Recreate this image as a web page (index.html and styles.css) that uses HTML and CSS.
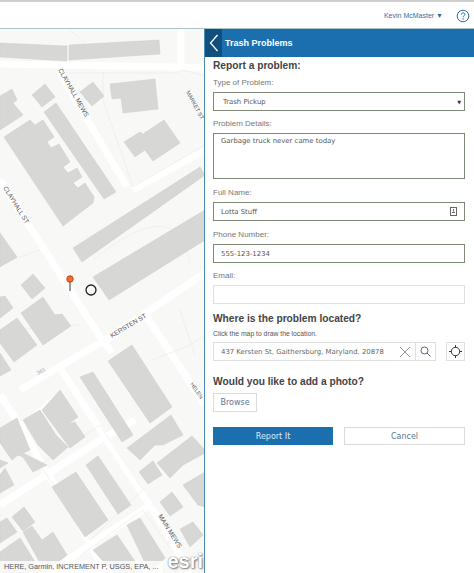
FILE: index.html
```html
<!DOCTYPE html>
<html>
    <head>
        <title>Trash Problems</title>
        <link rel="stylesheet" href="styles.css">
    </head>
    <body>
        <div class="topbar">
            <span class="username">Kevin McMaster &#9660;</span>
            <svg class="help" width="14" height="14" viewBox="0 0 14 14">
                <circle cx="7" cy="7" r="5.8" fill="none" stroke="#2c6f9f" stroke-width="1"/>
                <path d="M5.2 5.6c0-1.2.9-1.8 1.9-1.8s1.8.7 1.8 1.6c0 1.4-1.8 1.4-1.8 2.9" fill="none" stroke="#2c6f9f" stroke-width="1"/>
                <circle cx="7.1" cy="10" r=".7" fill="#2c6f9f"/>
            </svg>
        </div>
        <div class="main">
            <div class="map">
                <svg class="mapdraw" width="205" height="544" viewBox="0 29 205 544">
                    <rect x="0" y="29" width="205" height="544" fill="#f8f8f6"/>
                    <g class="roads">
                        <path d="M0 64L177 67L205 68"/>
                        <path d="M181 29V70"/>
                        <path d="M58 70L127 187"/>
                        <path d="M0 180L100 337L112 352"/>
                        <path d="M20 390L110 337L205 273"/>
                        <path d="M58 365L167 532L190 573"/>
                        <path d="M147 317L205 405"/>
                        <path d="M133 190L205 150"/>
                        <path d="M0 445L60 395"/>
                        <path d="M0 505L100 440L135 420"/>
                        <path d="M60 565L150 505"/>
                        <path d="M0 395L20 425L45 470L75 515L105 573"/>
                    </g>
                    <g class="lots">
                        <path d="M70 30L85 43M69 73H176L183 70L205 76"/>
                        <path d="M103 72V100L133 187L205 145"/>
                        <path d="M153 360L190 345L205 335M180 310L195 355"/>
                        <path d="M40 465L100 425L143 490L90 540Z"/>
                        <path d="M80 556L143 510L170 548"/>
                        <path d="M93 260Q180 190 190 265"/>
                        <path d="M0 265Q25 255 40 250M0 330L80 325"/>
                    </g>
                    <g class="buildings">
                        <path d="M0 43L67 46V61L0 57Z"/>
                        <path d="M69 45L159 40L160 54L69 60Z"/>
                        <path d="M32 95L45 84L55 97L42 107Z"/>
                        <path d="M0 96L12 89L17 100L13 103L23 115L0 130Z"/>
                        <path d="M44 112L56 103L116 192L104 199Z"/>
                        <path d="M4 137L30 120L35 125L43 120L54 137L47 142L51 148L59 144L70 162L63 167L68 173L77 168L82 177L73 183L78 188L85 183L94 197L93 203L63 226Z"/>
                        <path d="M80 92L93 82L104 96L92 106Z"/>
                        <path d="M110 84L155 79L158 109L123 113L121 98L112 99Z"/>
                        <path d="M124 142L140 132L143 134L164 120L180 143L153 161L145 150L135 157Z"/>
                        <path d="M73 248L200 167L205 175L82 262Z"/>
                        <path d="M93 277L205 210V240L109 300Z"/>
                        <path d="M0 233L17 257L0 267Z"/>
                        <path d="M21 285L33 274L45 288L32 299Z"/>
                        <path d="M0 297L5 296L13 308L0 318Z"/>
                        <path d="M21 313L43 297L55 315L62 314L71 326L43 345Z"/>
                        <path d="M0 330L17 318L37 345L14 362L0 343Z"/>
                        <path d="M0 353L11 370L0 376Z"/>
                        <path d="M108 361L132 345L172 407L150 423Z"/>
                        <path d="M80 377L93 372L133 435L122 442Z"/>
                        <path d="M127 448L171 415L183 435L163 445L155 445L140 460Z"/>
                        <path d="M157 463L192 436L205 450V453L183 465L170 478Z"/>
                        <path d="M139 472L153 461L162 475L148 484Z"/>
                        <path d="M183 485L205 472V507L198 505Z"/>
                        <path d="M160 502L172 492L183 507L170 516Z"/>
                        <path d="M180 529L193 522L203 535L190 547Z"/>
                        <path d="M86 465L98 456L131 505L118 514Z"/>
                        <path d="M52 487L76 472L108 520L85 537Z"/>
                        <path d="M42 410L60 390L78 417L68 424L75 422L85 437L70 448Z"/>
                        <path d="M23 420L40 410L56 435L68 447L53 460L38 445Z"/>
                        <path d="M0 428L17 418L30 450L23 453L47 465L33 472L23 457L18 455L12 460L0 443Z"/>
                        <path d="M0 460L8 463L0 468Z"/>
                        <path d="M0 475L5 468L14 485L0 493Z"/>
                        <path d="M12 517L24 507L35 522L23 531Z"/>
                        <path d="M0 522L7 518L17 532L0 543Z"/>
                        <path d="M23 532L32 526L42 540L53 532L67 555L45 572Z"/>
                        <path d="M0 552L20 538L42 573H0Z"/>
                        <path d="M93 550L117 535L143 573H114Z"/>
                        <path d="M127 525L140 518L165 558L150 573Z"/>
                    </g>
                    <g class="streets">
                        <text transform="translate(58 70) rotate(60)">CLAYHALL MEWS</text>
                        <text transform="translate(186 92) rotate(62)" class="tight">MARKET ST</text>
                        <text transform="translate(3 188) rotate(58)">CLAYHALL ST</text>
                        <text transform="translate(112 338) rotate(-31)">KERSTEN ST</text>
                        <text transform="translate(190 384) rotate(56)" class="tight">HELEN</text>
                        <text transform="translate(158 516) rotate(58)">MAIN MEWS</text>
                        <text transform="translate(38 375) rotate(-30)" class="small">361</text>
                    </g>
                    <circle cx="91" cy="290" r="5" fill="none" stroke="#222" stroke-width="1.3"/>
                    <path d="M70 281V291" stroke="#334" stroke-width="1"/>
                    <circle cx="70" cy="279" r="3.2" fill="#e8722c" stroke="#cf3e14" stroke-width="1"/>
                </svg>
                <div class="attribution">HERE, Garmin, INCREMENT P, USGS, EPA, ...</div>
                <div class="esri">esri</div>
            </div>
            <div class="panel">
                <div class="panelhead">
                    <div class="back">
                        <svg width="10" height="18" viewBox="0 0 10 18">
                            <path d="M8.5 1L1.5 9L8.5 17" fill="none" stroke="#fff" stroke-width="1.3"/>
                        </svg>
                    </div>
                    <span>Trash Problems</span>
                </div>
                <form class="report">
                    <h2 class="title">Report a problem:</h2>
                    <label class="lbl first">Type of Problem:</label>
                    <div class="inputform checked selectbox">
                        <span>Trash Pickup</span>
                        <span class="arrow">&#9660;</span>
                    </div>
                    <label class="lbl">Problem Details:</label>
                    <textarea class="inputform checked details">Garbage truck never came today</textarea>
                    <label class="lbl">Full Name:</label>
                    <div class="inputform checked namebox">
                        <span>Lotta Stuff</span>
                        <svg width="7" height="9" viewBox="0 0 7 9">
                            <rect x=".5" y=".5" width="6" height="8" fill="none" stroke="#666"/>
                            <path d="M3.5 2V4.5M2 5.5H5" stroke="#666"/>
                        </svg>
                    </div>
                    <label class="lbl">Phone Number:</label>
                    <input class="inputform checked" type="text" value="555-123-1234">
                    <label class="lbl">Email:</label>
                    <input class="inputform" type="text">
                    <h2 class="title where">Where is the problem located?</h2>
                    <p class="hint">Click the map to draw the location.</p>
                    <div class="searchrow">
                        <div class="search">
                            <span class="addr">437 Kersten St, Gaithersburg, Maryland, 20878</span>
                            <svg class="clear" width="12" height="12" viewBox="0 0 12 12">
                                <path d="M1 1L11 11M11 1L1 11" stroke="#999" stroke-width="1"/>
                            </svg>
                            <div class="searchbtn">
                                <svg width="11" height="11" viewBox="0 0 11 11">
                                    <circle cx="4.5" cy="4.5" r="3.5" fill="none" stroke="#55687a" stroke-width="1"/>
                                    <path d="M7 7L10.5 10.5" stroke="#55687a" stroke-width="1"/>
                                </svg>
                            </div>
                        </div>
                        <div class="locate">
                            <svg width="13" height="13" viewBox="0 0 13 13">
                                <circle cx="6.5" cy="6.5" r="4.2" fill="none" stroke="#333" stroke-width="1"/>
                                <path d="M6.5 0V2.5M6.5 10.5V13M0 6.5H2.5M10.5 6.5H13" stroke="#333" stroke-width="1"/>
                            </svg>
                        </div>
                    </div>
                    <h2 class="title photo">Would you like to add a photo?</h2>
                    <button class="browse" type="button">Browse</button>
                    <div class="actions">
                        <button id="btn" type="button">Report It</button>
                        <button id="cancel" type="button">Cancel</button>
                    </div>
                </form>
            </div>
        </div>
    </body>
</html>
```

FILE: styles.css
```css
body{
    margin:0;
    width:474px;
    height:573px;
    overflow:hidden;
    background-color:white;
    font-family:"Liberation Sans",Arial,sans-serif;
    color:#444;
}

.topbar{
    height:26px;
    border-top:2px solid #cfcfcf;
    border-bottom:1px solid #a9c3c9;
    display:flex;
    align-items:center;
    justify-content:flex-end;
    padding-right:4px;
}
.username{
    font-size:7px;
    color:#2f6f9f;
    margin-right:13px;
}
.help{
    margin-top:1px;
}

.main{
    display:flex;
    height:544px;
}
.map{
    position:relative;
    width:204px;
    flex:none;
    overflow:hidden;
    border-right:1px solid #4d8db5;
}
.mapdraw{
    display:block;
}
.roads path{
    fill:none;
    stroke:white;
    stroke-width:7;
}
.lots path{
    fill:none;
    stroke:#ebebe8;
    stroke-width:.7;
}
.buildings path{
    fill:#d7d7d5;
    stroke:#cdcdcb;
    stroke-width:.5;
}
.streets text{
    font-family:"Liberation Sans",Arial,sans-serif;
    font-size:6.5px;
    fill:#555;
}
.streets .small{
    font-size:5.5px;
    fill:#aaa;
}
.streets .tight{
    font-size:5.5px;
}
.attribution{
    position:absolute;
    left:0;
    bottom:0;
    width:159px;
    padding-left:4px;
    height:12px;
    line-height:12px;
    font-size:7.3px;
    white-space:nowrap;
    background-color:rgba(255,255,255,0.8);
    color:#555;
}
.esri{
    position:absolute;
    right:1px;
    bottom:0;
    font-size:20px;
    line-height:24px;
    font-weight:bold;
    color:white;
    text-shadow:0 0 1px #555,1px 1px 2px #777;
}

.panel{
    flex:1;
    min-width:0;
}
.panelhead{
    height:28px;
    background-color:#1c6fae;
    display:flex;
    align-items:center;
    color:white;
    font-size:9px;
    font-weight:bold;
}
.back{
    width:17px;
    height:28px;
    background-color:#10507f;
    display:flex;
    align-items:center;
    justify-content:center;
    margin-right:3px;
}

.report{
    display:flex;
    flex-direction:column;
    align-items:flex-start;
    padding:2px 9px 0 8px;
}
.title{
    margin:0;
    font-size:10.2px;
    line-height:14px;
    font-weight:bold;
    color:#444;
}
.lbl{
    font-size:8px;
    line-height:10px;
    color:#777;
    margin-top:8px;
    margin-bottom:4px;
}
.lbl.first{
    margin-top:5px;
}
.inputform{
    box-sizing:border-box;
    width:252px;
    height:19px;
    margin:0;
    padding:0 7px;
    border:1px solid #e0e0e0;
    border-radius:0;
    background-color:white;
    font-family:"DejaVu Sans",Verdana,sans-serif;
    font-size:6.9px;
    color:#555;
    outline:none;
}
.checked{
    border-color:#7c8a76;
}
.selectbox,.namebox{
    display:flex;
    align-items:center;
    justify-content:space-between;
}
.selectbox{
    padding-left:9px;
}
.namebox{
    margin-bottom:1px;
}
.arrow{
    font-size:5px;
    color:#333;
    margin-right:-4px;
}
.details{
    display:block;
    height:46px;
    margin-bottom:1px;
    padding:3px 7px;
    resize:none;
}
.where{
    margin-top:8px;
}
.hint{
    margin:3px 0 3px;
    font-size:6.8px;
    line-height:10px;
    color:#555;
}
.searchrow{
    display:flex;
    gap:10px;
    width:252px;
}
.search{
    box-sizing:border-box;
    flex:1;
    height:19px;
    border:1px solid #e0e0e0;
    display:flex;
    align-items:center;
    padding-left:7px;
    font-family:"DejaVu Sans",Verdana,sans-serif;
    font-size:6.9px;
    color:#666;
}
.addr{
    flex:1;
    white-space:nowrap;
}
.clear{
    margin-right:4px;
}
.searchbtn{
    width:19px;
    height:17px;
    border-left:1px solid #e0e0e0;
    display:flex;
    align-items:center;
    justify-content:center;
}
.locate{
    box-sizing:border-box;
    width:19px;
    height:19px;
    border:1px solid #e0e0e0;
    display:flex;
    align-items:center;
    justify-content:center;
}
.photo{
    margin-top:14px;
}
.browse{
    box-sizing:border-box;
    width:44px;
    height:19px;
    margin-top:4px;
    padding:0;
    border:1px solid #dcdcdc;
    background-color:white;
    font-family:"DejaVu Sans",Verdana,sans-serif;
    font-size:8px;
    color:#5a7690;
}
.actions{
    display:flex;
    justify-content:space-between;
    width:252px;
    margin-top:15px;
}
#btn,#cancel{
    box-sizing:border-box;
    height:18px;
    padding:0;
    font-family:"DejaVu Sans",Verdana,sans-serif;
    font-size:8px;
}
#btn{
    width:120px;
    border:1px solid #1c6fae;
    background-color:#1c6fae;
    color:#dfeaf2;
}
#cancel{
    width:121px;
    border:1px solid #dcdcdc;
    background-color:white;
    color:#5a7690;
}
```
